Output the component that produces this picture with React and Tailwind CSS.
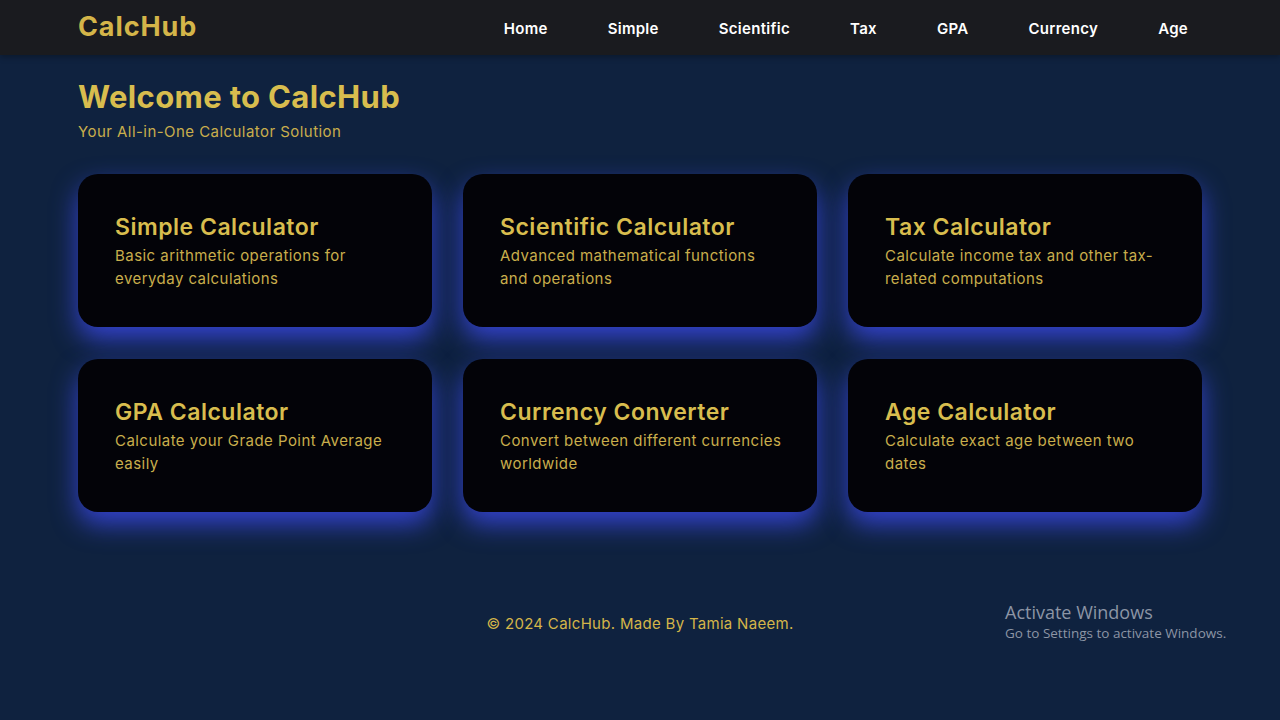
import React from "react";

const links = ["Home", "Simple", "Scientific", "Tax", "GPA", "Currency", "Age"];

const cards = [
  {
    title: "Simple Calculator",
    desc: "Basic arithmetic operations for everyday calculations",
  },
  {
    title: "Scientific Calculator",
    desc: "Advanced mathematical functions and operations",
  },
  {
    title: "Tax Calculator",
    desc: "Calculate income tax and other tax-related computations",
  },
  {
    title: "GPA Calculator",
    desc: "Calculate your Grade Point Average easily",
  },
  {
    title: "Currency Converter",
    desc: "Convert between different currencies worldwide",
  },
  {
    title: "Age Calculator",
    desc: "Calculate exact age between two dates",
  },
];

function Card({ title, desc }) {
  return (
    <div className="h-[153px] rounded-[20px] bg-[#030308] pl-[37px] pr-[32px] pt-[40px] shadow-[0_12px_26px_rgba(58,72,228,0.85)] cursor-pointer">
      <h2 className="text-[23px] font-semibold leading-[26px] tracking-[0.5px] text-[#d8bd4e]">
        {title}
      </h2>
      <p className="mt-[4px] text-[15px] leading-[23px] tracking-[0.45px] text-[#c9ae4c]">
        {desc}
      </p>
    </div>
  );
}

export default function App() {
  return (
    <div
      className="relative min-h-[720px] bg-[#0f223f] flex flex-col"
      style={{ fontFamily: "Inter, 'Noto Sans', sans-serif" }}
    >
      {/* ------------- navbar ------------- */}
      <nav className="h-[55px] bg-[#1a1b1f] shadow-[0_2px_6px_rgba(0,0,0,0.3)]">
        <div className="mx-auto w-[1124px] h-full flex items-center justify-between">
          <a className="text-[27px] font-bold tracking-[0.9px] text-[#d4b549]">
            CalcHub
          </a>
          <ul className="mt-[3px] flex items-center gap-[60px] pr-[14px]">
            {links.map((l) => (
              <li
                key={l}
                className="text-[15px] font-semibold tracking-[0.3px] text-white"
              >
                {l}
              </li>
            ))}
          </ul>
        </div>
      </nav>

      {/* ------------- main ------------- */}
      <main className="mx-auto w-[1124px] flex-1">
        <h1 className="mt-[24px] text-[31px] font-bold leading-[36px] tracking-[0.35px] text-[#d8bd4e]">
          Welcome to CalcHub
        </h1>
        <p className="mt-[6px] text-[15px] tracking-[0.45px] text-[#c9ae4c]">
          Your All-in-One Calculator Solution
        </p>
        <div className="mt-[30px] grid grid-cols-3 gap-x-[31px] gap-y-[32px]">
          {cards.map((c) => (
            <Card key={c.title} title={c.title} desc={c.desc} />
          ))}
        </div>
      </main>

      {/* ------------- footer ------------- */}
      <footer className="pb-[85px] text-center text-[15px] tracking-[0.3px] text-[#d4b549]">
        © 2024 CalcHub. Made By Tamia Naeem.
      </footer>

      <div
        className="absolute left-[1005px] top-[601px] text-[#8c95a5] pointer-events-none"
        style={{ fontFamily: "'Open Sans', sans-serif" }}
      >
        <div className="text-[18px] leading-[23px]">Activate Windows</div>
        <div className="text-[13.5px] leading-[19px]">
          Go to Settings to activate Windows.
        </div>
      </div>
    </div>
  );
}
